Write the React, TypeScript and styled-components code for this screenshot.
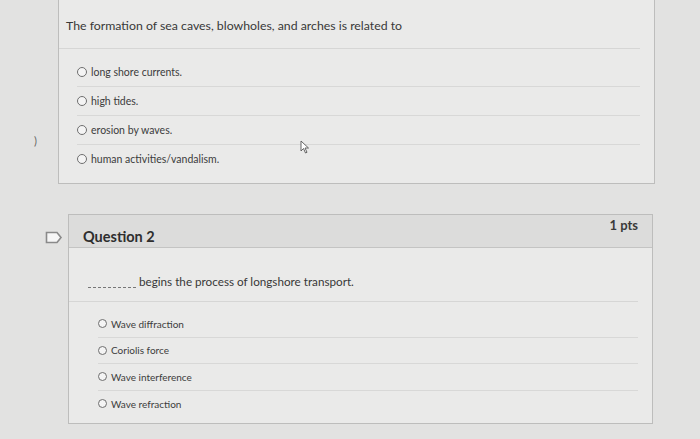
import React from "react";
import styled, { createGlobalStyle } from "styled-components";

const Global = createGlobalStyle`
  html, body { margin: 0; padding: 0; }
  body {
    background: #e2e2e1;
    font-family: Lato, "Open Sans", sans-serif;
    color: #3a3a3a;
    width: 700px;
    height: 439px;
    overflow: hidden;
  }
`;

const Page = styled.div`
  position: relative;
  display: flex;
  flex-direction: column;
  width: 700px;
  height: 439px;
`;

const Card = styled.section<{ $left: number; $width: number; $top: number; $height: number }>`
  margin-left: ${(p) => p.$left}px;
  margin-top: ${(p) => p.$top}px;
  width: ${(p) => p.$width}px;
  height: ${(p) => p.$height}px;
  box-sizing: border-box;
  background: #eaeae9;
  border: 1px solid #bdbdbc;
  display: flex;
  flex-direction: column;
  position: relative;
`;

const QuestionText = styled.div<{ $size: number; $pad: string }>`
  font-size: ${(p) => p.$size}px;
  padding: ${(p) => p.$pad};
  color: #383838;
  line-height: 1.2;
  border-bottom: 1px solid #d6d6d5;
  margin-right: 14px;
`;

const OptionList = styled.div<{ $left: number; $top: number }>`
  display: flex;
  flex-direction: column;
  margin: ${(p) => p.$top}px 14px 0 ${(p) => p.$left}px;
`;

const Option = styled.div<{ $h: number; $size: number; $last?: boolean }>`
  display: flex;
  align-items: center;
  gap: 4px;
  height: ${(p) => p.$h}px;
  font-size: ${(p) => p.$size}px;
  color: #3c3c3c;
  border-bottom: ${(p) => (p.$last ? "none" : "1px solid #d8d8d7")};
  box-sizing: border-box;
`;

const Radio = styled.span<{ $d: number }>`
  width: ${(p) => p.$d}px;
  height: ${(p) => p.$d}px;
  border-radius: 50%;
  border: 1px solid #6e6e6e;
  background: #f4f4f4;
  box-sizing: border-box;
  flex: none;
`;

const Header = styled.header`
  display: flex;
  justify-content: space-between;
  align-items: flex-start;
  height: 32px;
  background: #dcdcdb;
  border-bottom: 1px solid #c4c4c3;
  padding: 0 14px 0 14px;
`;

const Title = styled.h2`
  margin: 13px 0 0 0;
  font-size: 14.5px;
  font-weight: 700;
  color: #2e2e2e;
`;

const Points = styled.span`
  margin-top: 2px;
  font-size: 13px;
  font-weight: 700;
  color: #3a3a3a;
`;

const Blank = styled.span`
  display: inline-block;
  width: 48px;
  border-bottom: 1px dashed #777;
  margin-right: 3px;
  vertical-align: -2px;
`;

const Flag = styled.svg`
  position: absolute;
  left: -24px;
  top: 16px;
`;

const Cursor = styled.svg`
  position: absolute;
  left: 300px;
  top: 140px;
`;

const Mark = styled.span`
  position: absolute;
  left: 34px;
  top: 134px;
  font-size: 11px;
  color: #666;
`;

const q1 = [
  "long shore currents.",
  "high tides.",
  "erosion by waves.",
  "human activities/vandalism.",
];
const q2 = ["Wave diffraction", "Coriolis force", "Wave interference", "Wave refraction"];

export default function App() {
  return (
    <Page>
      <Global />
      <Card $left={58} $width={597} $top={-2} $height={186}>
        <QuestionText $size={12.3} $pad="20px 0 14px 7px">
          The formation of sea caves, blowholes, and arches is related to
        </QuestionText>
        <OptionList $left={18} $top={9}>
          {q1.map((t, i) => (
            <Option key={t} $h={29} $size={10.5} $last={i === q1.length - 1}>
              <Radio $d={10} />
              {t}
            </Option>
          ))}
        </OptionList>
      </Card>
      <Card $left={68} $width={585} $top={30} $height={210}>
        <Flag width="18" height="13" viewBox="0 0 18 13">
          <path d="M1.5 1.5 H12 L16 6.5 L12 11.5 H1.5 Z" fill="#f6f6f6" stroke="#8a8a8a" strokeWidth="1.6" />
        </Flag>
        <Header>
          <Title>Question 2</Title>
          <Points>1 pts</Points>
        </Header>
        <QuestionText $size={11.7} $pad="26px 0 13px 19px">
          <Blank />
          begins the process of longshore transport.
        </QuestionText>
        <OptionList $left={29} $top={9}>
          {q2.map((t, i) => (
            <Option key={t} $h={26.5} $size={10} $last={i === q2.length - 1}>
              <Radio $d={9} />
              {t}
            </Option>
          ))}
        </OptionList>
      </Card>
      <Mark>)</Mark>
      <Cursor width="12" height="14" viewBox="0 0 12 14">
        <path d="M1 1 L1 11 L3.5 8.5 L5.5 13 L7 12.3 L5 8 L8.5 8 Z" fill="#fff" stroke="#555" strokeWidth="0.9" />
      </Cursor>
    </Page>
  );
}
